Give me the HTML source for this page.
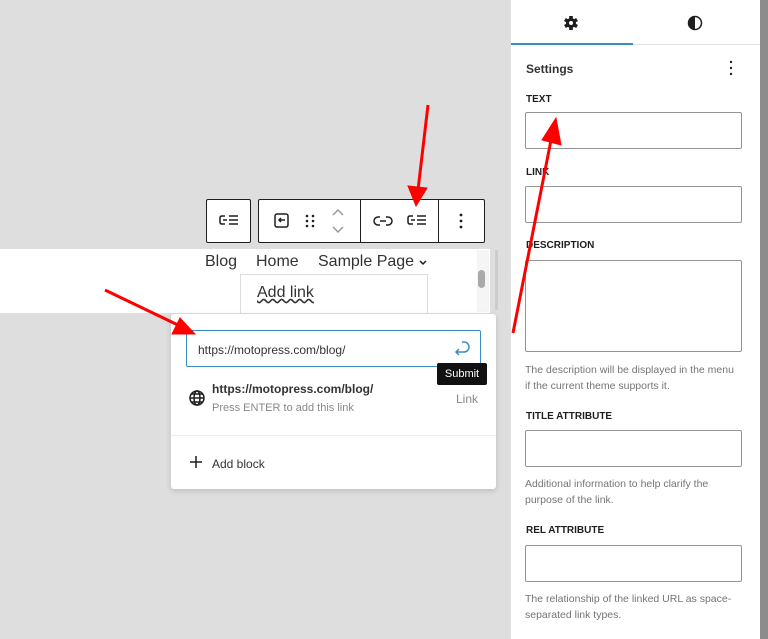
<!DOCTYPE html><html><head><style>
*{box-sizing:border-box;margin:0;padding:0}
body{width:768px;height:639px;background:#dedede;position:relative;overflow:hidden;font-family:"Liberation Sans",sans-serif;color:#1e1e1e}
.a{position:absolute}
.box{position:absolute;background:#fff;border:1px solid #1e1e1e}
.inp{position:absolute;left:525px;width:217px;border:1px solid #949494;border-radius:2px;background:#fff}
.lbl{position:absolute;left:526px;font-size:10px;font-weight:bold;color:#1e1e1e}
.help{position:absolute;left:525px;font-size:10.5px;color:#757575;line-height:16px;width:215px}
svg.i{position:absolute;fill:none;stroke:#1e1e1e;stroke-width:1.5}
</style></head><body>
<div class="a" style="left:0;top:249px;width:490px;height:64px;background:#fff"></div>
<div class="a" style="left:477px;top:250px;width:12px;height:62px;background:#f5f5f5"></div>
<div class="a" style="left:478px;top:270px;width:7px;height:18px;background:#aaa;border-radius:4px"></div>
<div class="a" style="left:495px;top:250px;width:3px;height:60px;background:#ccc"></div>
<div class="a" style="left:205px;top:253px;font-size:16px;color:#333">Blog</div>
<div class="a" style="left:256px;top:253px;font-size:16px;color:#333">Home</div>
<div class="a" style="left:318px;top:253px;font-size:16px;color:#333">Sample Page</div>
<svg class="i" style="left:418px;top:259px" width="10" height="8"><path d="M2 2l3 3 3-3"/></svg>
<div class="a" style="left:240px;top:274px;width:188px;height:40px;background:#fff;border:1px solid #ddd"></div>
<div class="a" style="left:257px;top:284px;font-size:16px;color:#333;text-decoration:underline wavy #333">Add link</div>
<div class="box" style="left:206px;top:199px;width:45px;height:44px;border-radius:2px"></div>
<svg class="i" style="left:218px;top:213px" width="22" height="16"><path d="M7 3H4Q2 3 2 5v4q0 2 2 2h3M5 7h4M11 3h9M11 7h9M11 11h9"/></svg>
<div class="box" style="left:258px;top:199px;width:227px;height:44px;border-radius:2px"></div>
<div class="a" style="left:360px;top:199px;width:1px;height:44px;background:#1e1e1e"></div>
<div class="a" style="left:438px;top:199px;width:1px;height:44px;background:#1e1e1e"></div>
<svg class="i" style="left:272px;top:212px" width="20" height="18"><rect x="3" y="2" width="13" height="13" rx="2"/><path d="M7 8h6M9 6l-2 2 2 2"/></svg>
<svg class="i" style="left:304px;top:213px;fill:#1e1e1e;stroke:none" width="12" height="16"><circle cx="3" cy="3" r="1.3"/><circle cx="9" cy="3" r="1.3"/><circle cx="3" cy="8" r="1.3"/><circle cx="9" cy="8" r="1.3"/><circle cx="3" cy="13" r="1.3"/><circle cx="9" cy="13" r="1.3"/></svg>
<svg class="i" style="left:330px;top:207px;stroke:#999" width="16" height="28"><path d="M3 8l5-5 5 5M3 20l5 5 5-5"/></svg>
<svg class="i" style="left:373px;top:213px" width="20" height="16"><path d="M7 4H5a4 4 0 000 8h2M13 4h2a4 4 0 010 8h-2M7 8h6"/></svg>
<svg class="i" style="left:406px;top:213px" width="22" height="16"><path d="M7 3H4Q2 3 2 5v4q0 2 2 2h3M5 7h4M11 3h9M11 7h9M11 11h9"/></svg>
<svg class="i" style="left:456px;top:212px;fill:#1e1e1e;stroke:none" width="10" height="18"><circle cx="5" cy="3" r="1.4"/><circle cx="5" cy="9" r="1.4"/><circle cx="5" cy="15" r="1.4"/></svg>
<div class="a" style="left:171px;top:314px;width:325px;height:175px;background:#fff;border-radius:3px;box-shadow:0 2px 6px rgba(0,0,0,.15)"></div>
<div class="a" style="left:186px;top:330px;width:295px;height:37px;border:1.5px solid #3a8cc7;border-radius:2px"></div>
<div class="a" style="left:198px;top:343px;font-size:12px;color:#333">https://motopress.com/blog/</div>
<svg class="i" style="left:452px;top:339px;stroke:#3a8cc7" width="20" height="18"><path d="M10 3h2a5 5 0 010 10H4M7 10l-3 3 3 3"/></svg>
<div class="a" style="left:437px;top:363px;width:50px;height:22px;background:#111;color:#fff;font-size:11px;line-height:22px;text-align:center;border-radius:2px">Submit</div>
<svg class="i" style="left:188px;top:389px" width="18" height="18"><circle cx="9" cy="9" r="7"/><ellipse cx="9" cy="9" rx="3" ry="7"/><path d="M2 9h14M3.5 5h11M3.5 13h11"/></svg>
<div class="a" style="left:212px;top:382px;font-size:12px;font-weight:bold;color:#333">https://motopress.com/blog/</div>
<div class="a" style="left:212px;top:402px;font-size:11px;color:#888">Press ENTER to add this link</div>
<div class="a" style="left:456px;top:392px;font-size:12px;color:#888">Link</div>
<div class="a" style="left:171px;top:435px;width:325px;height:1px;background:#eee"></div>
<svg class="i" style="left:189px;top:455px" width="14" height="14"><path d="M7 1v12M1 7h12"/></svg>
<div class="a" style="left:212px;top:457px;font-size:12px;color:#333">Add block</div>
<div class="a" style="left:510px;top:0;width:250px;height:639px;background:#fff;border-left:1px solid #e0e0e0"></div>
<div class="a" style="left:760px;top:0;width:8px;height:639px;background:#8c8c8c"></div>
<svg class="a" style="left:563px;top:15px" width="16" height="16"><g fill="#1e1e1e" transform="translate(8 8)"><circle r="5"/><rect x="-1.8" y="-7" width="3.6" height="14"/><rect x="-1.8" y="-7" width="3.6" height="14" transform="rotate(60)"/><rect x="-1.8" y="-7" width="3.6" height="14" transform="rotate(120)"/></g><circle cx="8" cy="8" r="2" fill="#fff"/></svg>
<svg class="a" style="left:687px;top:15px" width="16" height="16"><circle cx="8" cy="8" r="6.5" fill="none" stroke="#1e1e1e" stroke-width="1.5"/><path d="M8 1.5a6.5 6.5 0 000 13z" fill="#1e1e1e"/></svg>
<div class="a" style="left:511px;top:43px;width:122px;height:2px;background:#3a8cc7"></div>
<div class="a" style="left:633px;top:44px;width:127px;height:1px;background:#e0e0e0"></div>
<div class="a" style="left:526px;top:62px;font-size:12px;font-weight:bold;color:#333">Settings</div>
<svg class="a" style="left:726px;top:60px" width="10" height="16"><g fill="#1e1e1e"><circle cx="5" cy="2" r="1.2"/><circle cx="5" cy="8" r="1.2"/><circle cx="5" cy="14" r="1.2"/></g></svg>
<div class="lbl" style="top:94px">TEXT</div>
<div class="inp" style="top:112px;height:37px"></div>
<div class="lbl" style="top:167px">LINK</div>
<div class="inp" style="top:186px;height:37px"></div>
<div class="lbl" style="top:240px">DESCRIPTION</div>
<div class="inp" style="top:260px;height:92px"></div>
<div class="help" style="top:362px">The description will be displayed in the menu if the current theme supports it.</div>
<div class="lbl" style="top:411px">TITLE ATTRIBUTE</div>
<div class="inp" style="top:430px;height:37px"></div>
<div class="help" style="top:476px">Additional information to help clarify the purpose of the link.</div>
<div class="lbl" style="top:525px">REL ATTRIBUTE</div>
<div class="inp" style="top:545px;height:37px"></div>
<div class="help" style="top:591px">The relationship of the linked URL as space-separated link types.</div>
<svg class="a" style="left:0;top:0" width="768" height="639">
<g fill="#f00" stroke="#f00">
<line x1="105" y1="290" x2="180" y2="326" stroke-width="3"/>
<polygon points="195,334 172,334 180,318" />
<line x1="428" y1="105" x2="418" y2="190" stroke-width="3"/>
<polygon points="416,206 408,186 427,188"/>
<line x1="513" y1="333" x2="552" y2="135" stroke-width="3"/>
<polygon points="556,118 561,145 542,140"/>
</g></svg>
</body></html>
